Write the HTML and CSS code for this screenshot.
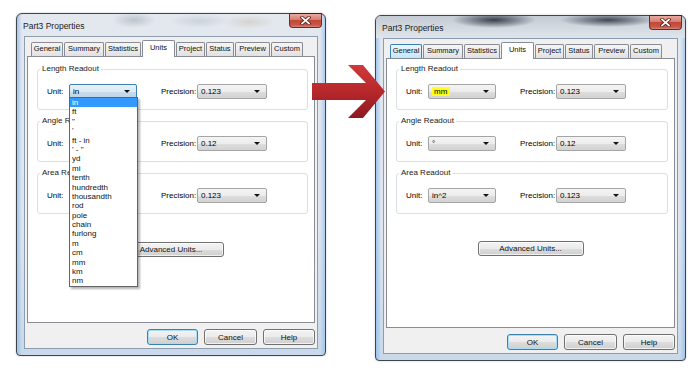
FILE: index.html
```html
<!DOCTYPE html>
<html>
<head>
<meta charset="utf-8">
<title>Part3 Properties</title>
<link rel="stylesheet" href="styles.css">
</head>
<body>
<div class="desk">

  <div class="win win-a">
    <div class="titlebar">
      <span class="title">Part3 Properties</span>
      <span class="close"><svg width="11" height="9" viewBox="0 0 11 9"><path d="M2 1.5L9 7.5M9 1.5L2 7.5" stroke="#5a1c14" stroke-width="3.4" stroke-linecap="square"/><path d="M2 1.5L9 7.5M9 1.5L2 7.5" stroke="#ffffff" stroke-width="1.7" stroke-linecap="square"/></svg></span>
    </div>
    <div class="body">
      <div class="tabs">
        <span class="tab t-general">General</span>
        <span class="tab t-summary">Summary</span>
        <span class="tab t-stats">Statistics</span>
        <span class="tab t-units sel">Units</span>
        <span class="tab t-project">Project</span>
        <span class="tab t-status">Status</span>
        <span class="tab t-preview">Preview</span>
        <span class="tab t-custom">Custom</span>
      </div>
      <div class="panel">
        <fieldset class="group">
          <legend>Length Readout</legend>
          <div class="row">
            <span class="lbl-unit">Unit:</span>
            <span class="combo c-unit focus"><span class="val">in</span><span class="caret"></span></span>
            <span class="lbl-prec">Precision:</span>
            <span class="combo c-prec"><span class="val">0.123</span><span class="caret"></span></span>
          </div>
        </fieldset>
        <fieldset class="group">
          <legend>Angle Readout</legend>
          <div class="row">
            <span class="lbl-unit">Unit:</span>
            <span class="combo c-unit"><span class="val"></span><span class="caret"></span></span>
            <span class="lbl-prec">Precision:</span>
            <span class="combo c-prec"><span class="val">0.12</span><span class="caret"></span></span>
          </div>
        </fieldset>
        <fieldset class="group">
          <legend>Area Readout</legend>
          <div class="row">
            <span class="lbl-unit">Unit:</span>
            <span class="combo c-unit"><span class="val"></span><span class="caret"></span></span>
            <span class="lbl-prec">Precision:</span>
            <span class="combo c-prec"><span class="val">0.123</span><span class="caret"></span></span>
          </div>
        </fieldset>
        <div class="adv"><span class="btn adv-btn">Advanced Units...</span></div>
      </div>
      <div class="footer">
        <span class="btn b-ok default">OK</span>
        <span class="btn b-cancel">Cancel</span>
        <span class="btn b-help">Help</span>
      </div>
    </div>
    <div class="dropdown">
      <div class="item hi">in</div>
      <div class="item">ft</div>
      <div class="item">"</div>
      <div class="item">'</div>
      <div class="item">ft - in</div>
      <div class="item">' - "</div>
      <div class="item">yd</div>
      <div class="item">mi</div>
      <div class="item">tenth</div>
      <div class="item">hundredth</div>
      <div class="item">thousandth</div>
      <div class="item">rod</div>
      <div class="item">pole</div>
      <div class="item">chain</div>
      <div class="item">furlong</div>
      <div class="item">m</div>
      <div class="item">cm</div>
      <div class="item">mm</div>
      <div class="item">km</div>
      <div class="item">nm</div>
    </div>
  </div>

  <div class="win win-b">
    <div class="titlebar">
      <span class="title">Part3 Properties</span>
      <span class="close"><svg width="11" height="9" viewBox="0 0 11 9"><path d="M2 1.5L9 7.5M9 1.5L2 7.5" stroke="#5a1c14" stroke-width="3.4" stroke-linecap="square"/><path d="M2 1.5L9 7.5M9 1.5L2 7.5" stroke="#ffffff" stroke-width="1.7" stroke-linecap="square"/></svg></span>
    </div>
    <div class="body">
      <div class="tabs">
        <span class="tab t-general hover">General</span>
        <span class="tab t-summary">Summary</span>
        <span class="tab t-stats">Statistics</span>
        <span class="tab t-units sel">Units</span>
        <span class="tab t-project">Project</span>
        <span class="tab t-status">Status</span>
        <span class="tab t-preview">Preview</span>
        <span class="tab t-custom">Custom</span>
      </div>
      <div class="panel">
        <fieldset class="group">
          <legend>Length Readout</legend>
          <div class="row">
            <span class="lbl-unit">Unit:</span>
            <span class="combo c-unit"><span class="val"><span class="mark">mm</span></span><span class="caret"></span></span>
            <span class="lbl-prec">Precision:</span>
            <span class="combo c-prec"><span class="val">0.123</span><span class="caret"></span></span>
          </div>
        </fieldset>
        <fieldset class="group">
          <legend>Angle Readout</legend>
          <div class="row">
            <span class="lbl-unit">Unit:</span>
            <span class="combo c-unit"><span class="val">°</span><span class="caret"></span></span>
            <span class="lbl-prec">Precision:</span>
            <span class="combo c-prec"><span class="val">0.12</span><span class="caret"></span></span>
          </div>
        </fieldset>
        <fieldset class="group">
          <legend>Area Readout</legend>
          <div class="row">
            <span class="lbl-unit">Unit:</span>
            <span class="combo c-unit"><span class="val">in^2</span><span class="caret"></span></span>
            <span class="lbl-prec">Precision:</span>
            <span class="combo c-prec"><span class="val">0.123</span><span class="caret"></span></span>
          </div>
        </fieldset>
        <div class="adv"><span class="btn adv-btn">Advanced Units...</span></div>
      </div>
      <div class="footer">
        <span class="btn b-ok default">OK</span>
        <span class="btn b-cancel">Cancel</span>
        <span class="btn b-help">Help</span>
      </div>
    </div>
  </div>

  <svg class="arrow" width="78" height="57" viewBox="310 63 78 57">
    <defs>
      <linearGradient id="ag" x1="0" y1="0" x2="0" y2="1">
        <stop offset="0" stop-color="#cf3a3c"/>
        <stop offset="0.45" stop-color="#b9292c"/>
        <stop offset="1" stop-color="#8c1b1f"/>
      </linearGradient>
    </defs>
    <polygon points="312,83 366,83 348,65 363,65 385,91.5 363,118 348,118 366,100 312,100" fill="url(#ag)"/>
  </svg>

</div>
</body>
</html>
```

FILE: styles.css
```css
html, body {
  margin: 0;
  padding: 0;
  background: #ffffff;
}

body {
  font-family: "Liberation Sans", Arial, sans-serif;
  font-size: 8px;
  color: #000;
}

.desk {
  position: relative;
  width: 698px;
  height: 374px;
  overflow: hidden;
  background: #ffffff;
}

/* ---------- window frame ---------- */
.win {
  position: absolute;
  box-sizing: border-box;
  display: flex;
  flex-direction: column;
  padding: 0 7px 6px 7px;
  border: 1px solid #40454c;
  border-radius: 6px 6px 4px 4px;
  background:
    linear-gradient(to right, rgba(140, 185, 235, 0.75) 0, rgba(140, 185, 235, 0) 5px),
    linear-gradient(to left, rgba(140, 185, 235, 0.6) 0, rgba(140, 185, 235, 0) 5px),
    linear-gradient(to bottom, #e3e8ee 0, #dfe6ee 60%, #c9d9ea 100%);
  box-shadow: 0 0 2px rgba(0, 0, 0, 0.25);
}

.win-a {
  left: 16px;
  top: 13px;
  width: 310px;
  height: 343px;
}

.win-b {
  left: 375px;
  top: 15px;
  width: 311px;
  height: 346px;
}

.titlebar {
  height: 22px;
  flex: none;
  display: flex;
  align-items: center;
  justify-content: space-between;
}

.win-a .titlebar {
  background:
    radial-gradient(ellipse 22px 8px at 110px 6px, rgba(120, 130, 145, 0.35), rgba(120, 130, 145, 0)),
    radial-gradient(ellipse 30px 7px at 175px 7px, rgba(150, 160, 170, 0.3), rgba(150, 160, 170, 0)),
    radial-gradient(ellipse 26px 7px at 225px 8px, rgba(170, 150, 120, 0.25), rgba(170, 150, 120, 0));
}

.win-b .titlebar {
  margin: 0 -7px;
  padding: 0 7px;
  background:
    radial-gradient(ellipse 42px 8px at 118px 4px, rgba(20, 25, 40, 0.8), rgba(20, 25, 40, 0)),
    radial-gradient(ellipse 48px 7px at 232px 4px, rgba(20, 25, 40, 0.75), rgba(20, 25, 40, 0)),
    linear-gradient(to bottom, #c4cbd4, #dfe5ec);
  border-radius: 5px 5px 0 0;
}

.title {
  font-size: 8.5px;
  color: #1b1b1b;
  margin-left: -1px;
  margin-top: 1px;
}

.close {
  align-self: flex-start;
  box-sizing: border-box;
  width: 33px;
  height: 15px;
  margin-top: -1px;
  margin-right: -4px;
  border: 1px solid #6b2b25;
  border-top-color: #4a1d19;
  border-radius: 0 0 4px 4px;
  background: linear-gradient(to bottom, #e9a99f 0, #d47d70 45%, #c24935 50%, #c9574a 85%, #d8877b 100%);
  display: flex;
  align-items: center;
  justify-content: center;
}

/* ---------- dialog body ---------- */
.body {
  flex: 1;
  display: flex;
  flex-direction: column;
  background: #f0f0f0;
  border: 1px solid #8e9cb0;
  min-height: 0;
}

.tabs {
  flex: none;
  display: flex;
  align-items: flex-end;
  height: 16px;
  margin-top: 3px;
  padding-left: 6px;
  gap: 1px;
  position: relative;
  z-index: 1;
}

.tab {
  box-sizing: border-box;
  height: 14px;
  border: 1px solid #898c95;
  border-bottom: none;
  border-radius: 2px 2px 0 0;
  background: linear-gradient(to bottom, #f5f5f5 0, #ececec 50%, #e1e1e1 100%);
  font-size: 7.5px;
  line-height: 12px;
  text-align: center;
  color: #111;
  white-space: nowrap;
}

.tab.sel {
  height: 17px;
  margin-bottom: -1px;
  background: #ffffff;
  line-height: 13px;
}

.tab.hover {
  border-color: #3c7fb1;
  background: linear-gradient(to bottom, #eaf6fd 0, #d9f0fc 50%, #bee6fd 100%);
}

.t-general { width: 32px; }
.t-summary { width: 40px; }
.t-stats   { width: 36px; }
.t-units   { width: 33px; }
.t-project { width: 29px; }
.t-status  { width: 28px; }
.t-preview { width: 35px; }
.t-custom  { width: 32px; }

.panel {
  flex: 1;
  margin: 0 2px;
  background: #ffffff;
  border: 1px solid #898c95;
  padding: 7px 6px 0 9px;
  display: flex;
  flex-direction: column;
  gap: 6px;
  min-height: 0;
}

.win-b .panel {
  padding-top: 5px;
}

/* ---------- groups ---------- */
.group {
  margin: 0;
  padding: 0;
  border: 1px solid #d8e0e6;
  border-radius: 3px;
  min-width: 0;
}

.group legend {
  font-size: 8px;
  line-height: 10px;
  padding: 0 2px;
  margin-left: 2px;
  color: #1a1a1a;
}

.row {
  display: flex;
  align-items: center;
  height: 15px;
  margin: 10px 0 10px 9px;
}

.lbl-unit {
  width: 22px;
  flex: none;
}

.lbl-prec {
  width: 36px;
  flex: none;
  margin-left: 24px;
}

.combo {
  box-sizing: border-box;
  height: 15px;
  flex: none;
  display: flex;
  align-items: center;
  padding-left: 3px;
  border: 1px solid #a5a5a5;
  border-radius: 2px;
  background: linear-gradient(to bottom, #f4f4f4 0, #ececec 50%, #dedede 51%, #d2d2d2 100%);
}

.combo.focus {
  border-color: #3c7fb1;
  background: linear-gradient(to bottom, #e8f1f8 0, #dde9f3 50%, #c9dcec 51%, #bcd3e6 100%);
}

.c-unit { width: 68px; }
.c-prec { width: 70px; }

.val {
  flex: 1;
  white-space: nowrap;
}

.mark {
  background: #ffff1a;
  padding: 0 3px 0 2px;
}

.caret {
  flex: none;
  width: 0;
  height: 0;
  margin-right: 6px;
  border-left: 3px solid transparent;
  border-right: 3px solid transparent;
  border-top: 3px solid #111;
}

/* ---------- buttons ---------- */
.btn {
  box-sizing: border-box;
  display: flex;
  align-items: center;
  justify-content: center;
  height: 16px;
  border: 1px solid #707070;
  border-radius: 3px;
  background: linear-gradient(to bottom, #f3f3f3 0, #ebebeb 50%, #dddddd 51%, #cfcfcf 100%);
  box-shadow: inset 0 0 0 1px rgba(255, 255, 255, 0.7);
  font-size: 8px;
  color: #111;
  white-space: nowrap;
}

.btn.default {
  border-color: #3c7fb1;
  box-shadow: inset 0 0 0 1px #a9dcf6;
}

.adv {
  display: flex;
  justify-content: center;
  margin-top: 22px;
}

.win-b .adv {
  margin-top: 21px;
}

.adv-btn {
  width: 106px;
  height: 15px;
  margin-left: -3px;
}

.footer {
  flex: none;
  display: flex;
  justify-content: flex-end;
  gap: 6px;
  margin: 6px 2px 3px 0;
}

.b-ok     { width: 51px; }
.b-cancel { width: 53px; }
.b-help   { width: 52px; }

/* ---------- open dropdown list ---------- */
.dropdown {
  position: absolute;
  left: 52px;
  top: 83px;
  width: 69px;
  box-sizing: border-box;
  border: 1px solid #646464;
  background: #ffffff;
  box-shadow: 2px 2px 2px rgba(0, 0, 0, 0.3);
  z-index: 5;
}

.item {
  height: 9.4px;
  line-height: 9.4px;
  font-size: 8px;
  padding-left: 2px;
  white-space: nowrap;
  color: #111;
}

.item.hi {
  background: #3399ff;
  color: #ffffff;
}

/* ---------- arrow ---------- */
.arrow {
  position: absolute;
  left: 310px;
  top: 63px;
  z-index: 10;
}
```
